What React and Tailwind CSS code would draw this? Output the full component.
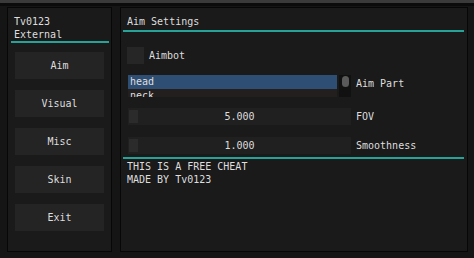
import React from 'react'

const menu = ['Aim', 'Visual', 'Misc', 'Skin', 'Exit']

const Slider = ({ value, label }) => (
  <div className="flex items-center">
    <div className="relative flex h-[17px] w-[223px] items-center justify-center bg-[#202020]">
      <div className="absolute left-[1px] top-[2px] h-[13px] w-[9px] bg-[#2b2b2b]" />
      <span className="relative">{value}</span>
    </div>
    <span className="ml-[5px]">{label}</span>
  </div>
)

const App = () => {
  return (
    <div className="h-[258px] w-[474px] overflow-hidden bg-[#151515] font-['DejaVu_Sans_Mono',monospace] text-[10px] leading-[13px] text-[#dedede]">
      <div className="h-[3px] bg-[#3a3a3a]" />
      <div className="flex h-[255px] border-t-[3px] border-[#0b0b0b] pl-[7px] pr-[6px] pb-[6px] pt-[1px]">
        {/* sidebar */}
        <div className="flex w-[105px] flex-col border border-[#070707] bg-[#1a1a1a] pt-[7px]">
          <div className="pl-[6px]">
            Tv0123
            <br />
            External
          </div>
          <div className="ml-[3px] mr-[2px] h-[2px] bg-[#26a398]" />
          <div className="mt-[9px] flex flex-col gap-[11px] px-[7px]">
            {menu.map((m) => (
              <div key={m} className="flex h-[27px] items-center justify-center bg-[#242424]">
                {m}
              </div>
            ))}
          </div>
        </div>

        {/* settings panel */}
        <div className="ml-[8px] flex flex-1 flex-col border border-[#070707] bg-[#1a1a1a] pt-[7px]">
          <div className="pl-[6px]">Aim Settings</div>
          <div className="ml-[2px] mr-[3px] mt-[2px] h-[2px] bg-[#26a398]" />

          <div className="mt-[15px] flex items-center pl-[6px]">
            <div className="h-[17px] w-[17px] bg-[#262626]" />
            <span className="ml-[5px]">Aimbot</span>
          </div>

          <div className="mt-[11px] flex items-start pl-[7px]">
            <div className="h-[22px] w-[209px] overflow-hidden bg-[#231f1f]">
              <div className="h-[14px] bg-[#2f4e74] pl-[2px] leading-[14px]">head</div>
              <div className="pl-[2px] leading-[14px]">neck</div>
            </div>
            <div className="ml-[2px] h-[22px] w-[12px] bg-[#111111] pt-[1px]">
              <div className="mx-auto h-[11px] w-[7px] rounded-full bg-[#5a5a5a]" />
            </div>
            <span className="ml-[5px] mt-[2px]">Aim Part</span>
          </div>

          <div className="mt-[11px] flex flex-col gap-[12px] pl-[7px]">
            <Slider value="5.000" label="FOV" />
            <Slider value="1.000" label="Smoothness" />
          </div>

          <div className="ml-[2px] mr-[3px] mt-[3px] h-[2px] bg-[#26a398]" />
          <div className="mt-[1px] pl-[6px]">
            THIS IS A FREE CHEAT
            <br />
            MADE BY Tv0123
          </div>
        </div>
      </div>
    </div>
  )
}

export default App
